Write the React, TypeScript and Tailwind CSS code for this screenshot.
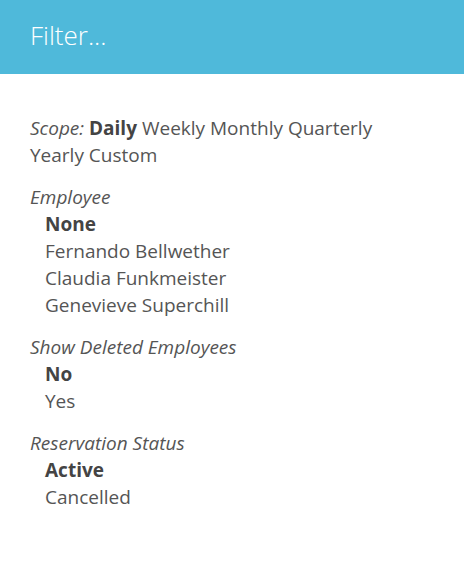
const employees = ["None", "Fernando Bellwether", "Claudia Funkmeister", "Genevieve Superchill"];
const deleted = ["No", "Yes"];
const statuses = ["Active", "Cancelled"];

function Group({ label, options }: { label: string; options: string[] }) {
  return (
    <div>
      <div className="italic">{label}</div>
      <ul className="pl-[15px]">
        {options.map((o, i) => (
          <li key={o} className={i === 0 ? "font-bold text-[#444]" : ""}>
            {o}
          </li>
        ))}
      </ul>
    </div>
  );
}

export default function App() {
  return (
    <div className="w-[464px] h-[563px] bg-white font-['Open_Sans',sans-serif] text-[#555]">
      <header className="h-[74px] bg-[#4fb9da] px-[30px] flex items-center">
        <h1 className="text-[26px] font-light text-white pb-[3px]">Filter...</h1>
      </header>
      <div className="px-[30px] pt-[41px] text-[19px] leading-[27px] flex flex-col gap-[15px]">
        <p className="w-[385px]">
          <span className="italic">Scope:</span> <span className="font-bold text-[#444]">Daily</span> Weekly Monthly
          Quarterly Yearly Custom
        </p>
        <Group label="Employee" options={employees} />
        <Group label="Show Deleted Employees" options={deleted} />
        <Group label="Reservation Status" options={statuses} />
      </div>
    </div>
  );
}
